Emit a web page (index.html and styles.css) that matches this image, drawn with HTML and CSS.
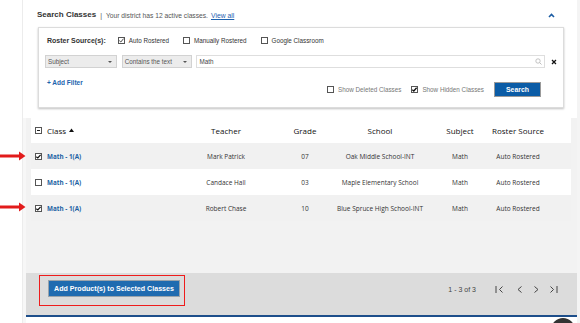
FILE: index.html
```html
<!DOCTYPE html>
<html>
<head>
<meta charset="utf-8">
<link rel="stylesheet" href="styles.css">
</head>
<body>
<div class="page">
  <section class="search">
    <div class="search-head">
      <h1 class="title">Search Classes</h1>
      <span class="sep">|</span>
      <span class="sub">Your district has 12 active classes.</span>
      <a class="link">View all</a>
      <svg class="chev" width="7" height="5" viewBox="0 0 7 5"><path d="M1 4 L3.5 1.5 L6 4" fill="none" stroke="#1b5ca3" stroke-width="1.6"/></svg>
    </div>
    <div class="box">
      <div class="roster-row">
        <span class="roster-label">Roster Source(s):</span>
        <label class="cb first"><span class="tick on"><svg width="7" height="7" viewBox="0 0 7 7"><path d="M1.3 3.6 L2.8 5 L5.6 1.6" fill="none" stroke="#333" stroke-width="0.9"/></svg></span>Auto Rostered</label>
        <label class="cb"><span class="tick"></span>Manually Rostered</label>
        <label class="cb"><span class="tick"></span>Google Classroom</label>
      </div>
      <div class="filter-row">
        <div class="select s1"><span>Subject</span><span class="caret"></span></div>
        <div class="select s2"><span>Contains the text</span><span class="caret"></span></div>
        <div class="input"><span>Math</span><svg class="mag" width="7" height="7" viewBox="0 0 7 7"><circle cx="3" cy="3" r="2.2" fill="none" stroke="#b5b5b5" stroke-width="0.8"/><path d="M4.6 4.6 L6.5 6.5" stroke="#b5b5b5" stroke-width="0.9"/></svg></div>
        <svg class="clear" width="6" height="6" viewBox="0 0 6 6"><path d="M1 1 L5 5 M5 1 L1 5" stroke="#111" stroke-width="1.3"/></svg>
      </div>
      <div class="action-row">
        <a class="add-filter">+ Add Filter</a>
        <div class="actions">
          <label class="cb light"><span class="tick"></span>Show Deleted Classes</label>
          <label class="cb light gap"><span class="tick dark"><svg width="7" height="7" viewBox="0 0 7 7"><path d="M1.3 3.8 L2.8 5 L5.6 1.8" fill="none" stroke="#111" stroke-width="1.3"/></svg></span>Show Hidden Classes</label>
          <button class="search-btn">Search</button>
        </div>
      </div>
    </div>
  </section>

  <section class="results">
    <div class="table">
      <div class="row head">
        <div class="c-class"><span class="tick minus"><span class="dash"></span></span><span>Class</span><svg class="sort" width="5" height="4" viewBox="0 0 5 4"><path d="M0 4 L2.5 0.5 L5 4 Z" fill="#111"/></svg></div>
        <div class="c">Teacher</div>
        <div class="c">Grade</div>
        <div class="c">School</div>
        <div class="c">Subject</div>
        <div class="c">Roster Source</div>
        <div></div>
      </div>
      <div class="row grey">
        <div class="c-class"><span class="tick"><svg width="7" height="7" viewBox="0 0 7 7"><path d="M1.3 3.8 L2.8 5 L5.6 1.8" fill="none" stroke="#111" stroke-width="1.2"/></svg></span><a class="cls">Math - 1(A)</a></div>
        <div class="c">Mark Patrick</div>
        <div class="c">07</div>
        <div class="c">Oak Middle School-INT</div>
        <div class="c">Math</div>
        <div class="c">Auto Rostered</div>
        <div></div>
      </div>
      <div class="row white">
        <div class="c-class"><span class="tick"></span><a class="cls">Math - 1(A)</a></div>
        <div class="c">Candace Hall</div>
        <div class="c">03</div>
        <div class="c">Maple Elementary School</div>
        <div class="c">Math</div>
        <div class="c">Auto Rostered</div>
        <div></div>
      </div>
      <div class="row grey">
        <div class="c-class"><span class="tick"><svg width="7" height="7" viewBox="0 0 7 7"><path d="M1.3 3.8 L2.8 5 L5.6 1.8" fill="none" stroke="#111" stroke-width="1.2"/></svg></span><a class="cls">Math - 1(A)</a></div>
        <div class="c">Robert Chase</div>
        <div class="c">10</div>
        <div class="c">Blue Spruce High School-INT</div>
        <div class="c">Math</div>
        <div class="c">Auto Rostered</div>
        <div></div>
      </div>
    </div>
  </section>

  <footer class="footbar">
    <button class="add-btn">Add Product(s) to Selected Classes</button>
    <div class="pager">
      <span class="count">1 - 3 of 3</span>
      <svg class="pg p1" width="9" height="9" viewBox="0 0 9 9"><path d="M1 1 L1 8 M7.5 1.5 L4.5 4.5 L7.5 7.5" fill="none" stroke="#444" stroke-width="1"/></svg>
      <svg class="pg p2" width="7" height="9" viewBox="0 0 7 9"><path d="M5.5 1.5 L2 4.5 L5.5 7.5" fill="none" stroke="#444" stroke-width="1"/></svg>
      <svg class="pg p3" width="7" height="9" viewBox="0 0 7 9"><path d="M1.5 1.5 L5 4.5 L1.5 7.5" fill="none" stroke="#444" stroke-width="1"/></svg>
      <svg class="pg p4" width="9" height="9" viewBox="0 0 9 9"><path d="M1.5 1.5 L4.5 4.5 L1.5 7.5 M8 1 L8 8" fill="none" stroke="#444" stroke-width="1"/></svg>
    </div>
    <div class="annot"></div>
  </footer>
</div>

<svg class="arrow a1" width="26" height="10" viewBox="0 0 26 10"><path d="M0 3.5 L19 3.5 L19 0.5 L25.5 5 L19 9.5 L19 6.5 L0 6.5 Z" fill="#e21b1b"/></svg>
<svg class="arrow a2" width="26" height="10" viewBox="0 0 26 10"><path d="M0 3.5 L19 3.5 L19 0.5 L25.5 5 L19 9.5 L19 6.5 L0 6.5 Z" fill="#e21b1b"/></svg>
<div class="chat"></div>
</body>
</html>
```

FILE: styles.css
```css
* { box-sizing: border-box; margin: 0; padding: 0; }

html, body { overflow: hidden; }

body {
  width: 580px;
  height: 323px;
  position: relative;
  background: #fff;
  font-family: "Liberation Sans", Arial, sans-serif;
  color: #333;
}

.page {
  margin-left: 22px;
  width: 558px;
  height: 323px;
  border-left: 1px solid #ececec;
  border-right: 3px solid #f4f4f4;
  background: linear-gradient(to right, #f7f7f7 3px, transparent 3px);
}

/* ---------- search section ---------- */
.search {
  height: 118px;
  padding: 10px 13px 0 14px;
  background: #fff;
}

.search-head {
  display: flex;
  align-items: center;
  height: 10px;
}

.title {
  font-size: 8px;
  font-weight: bold;
  color: #333;
  line-height: 10px;
}

.sep {
  font-size: 7px;
  color: #555;
  margin: 0 4px;
}

.sub {
  font-size: 6.7px;
  color: #555;
}

.link {
  font-size: 6.8px;
  color: #1f63b0;
  text-decoration: underline;
  margin-left: 3px;
}

.chev {
  margin-left: auto;
  margin-right: 9px;
}

.box {
  margin: 7px 0 0 1px;
  width: 526px;
  border: 1px solid #dcdcdc;
  box-shadow: 0 1px 2px rgba(0, 0, 0, 0.25);
  padding: 7px 6px 10px 8px;
  background: #fff;
}

.roster-row {
  display: flex;
  align-items: center;
  height: 10px;
}

.roster-label {
  font-size: 7px;
  font-weight: bold;
  color: #333;
}

.cb {
  display: flex;
  align-items: center;
  font-size: 6.3px;
  color: #333;
  margin-left: 14px;
}

.cb.first { margin-left: 12px; }

.cb.light { color: #777; margin-left: 0; }
.cb.light.gap { margin-left: 10px; }

.tick {
  width: 7px;
  height: 7px;
  border: 1px solid #555;
  background: #fff;
  margin-right: 4px;
  display: flex;
  align-items: center;
  justify-content: center;
  position: relative;
  flex: none;
}

.tick svg {
  position: absolute;
  left: -1px;
  top: -1px;
}

.tick.minus .dash {
  width: 3px;
  height: 1px;
  background: #222;
}

.filter-row {
  display: flex;
  align-items: center;
  height: 13px;
  margin: 10px 0 0 -2px;
}

.select {
  height: 13px;
  background: #ececec;
  border: 1px solid #d2d2d2;
  display: flex;
  align-items: center;
  justify-content: space-between;
  padding: 0 4px 0 2px;
  font-size: 6.3px;
  color: #555;
}

.s1 { width: 72px; }
.s2 { width: 71px; margin-left: 5px; }

.caret {
  width: 0;
  height: 0;
  border-left: 2px solid transparent;
  border-right: 2px solid transparent;
  border-top: 2.5px solid #555;
}

.input {
  width: 350px;
  height: 13px;
  margin-left: 4px;
  border: 1px solid #dedede;
  background: #fff;
  display: flex;
  align-items: center;
  justify-content: space-between;
  padding: 0 2px 0 2px;
  font-size: 6.3px;
  color: #444;
}

.clear {
  margin-left: 6px;
}

.action-row {
  display: flex;
  align-items: flex-start;
  height: 16px;
  margin-top: 13px;
}

.add-filter {
  font-size: 6.5px;
  font-weight: bold;
  color: #1b63ad;
  line-height: 8px;
  margin-top: -2px;
}

.actions {
  margin-left: auto;
  margin-right: 16px;
  display: flex;
  align-items: center;
  height: 16px;
}

.search-btn {
  margin-left: 10px;
  width: 47px;
  height: 15px;
  background: #0b5ca6;
  border: 1px solid #9a9a9a;
  color: #fff;
  font-family: "Liberation Sans", Arial, sans-serif;
  font-size: 6.9px;
  font-weight: bold;
}

/* ---------- results ---------- */
.results {
  height: 155px;
  padding-left: 8px;
  background: linear-gradient(to right, #f7f7f7 3px, #f2f2f2 3px);
}

.table {
  width: 540px;
  font-family: "Open Sans", "Noto Sans", sans-serif;
}

.row {
  display: grid;
  grid-template-columns: 139px 112px 46px 104px 56px 60px 23px;
  align-items: center;
  height: 26px;
  font-size: 6.5px;
  color: #333;
}

.row.head {
  height: 25px;
  background: #fff;
  font-size: 8px;
  color: #111;
}

.row.grey { background: #f1f1f1; }
.row.white { background: #fff; }

.c { text-align: center; white-space: nowrap; }

.c-class {
  display: flex;
  align-items: center;
  padding-left: 4px;
}

.c-class .tick { margin-right: 5px; }

.sort { margin-left: 3px; margin-top: -2px; }

.cls {
  color: #1a5fa3;
  font-weight: bold;
  font-size: 6.3px;
}

/* ---------- bottom bar ---------- */
.footbar {
  position: relative;
  margin-left: 3px;
  height: 44px;
  background: #dcdcdc;
  border-bottom: 2px solid #1d4e8a;
  display: flex;
  align-items: flex-start;
  padding: 7px 19px 0 22px;
}

.add-btn {
  width: 132px;
  height: 17px;
  background: #1f6bb0;
  border: 1px solid #9aa3ab;
  color: #fff;
  font-family: "Liberation Sans", Arial, sans-serif;
  font-size: 7.1px;
  font-weight: bold;
}

.pager {
  margin-left: auto;
  display: flex;
  align-items: center;
  height: 18px;
}

.count {
  font-size: 7px;
  color: #444;
  margin-right: 19px;
}

.p2 { margin-left: 12px; }
.p3 { margin-left: 10px; }
.p4 { margin-left: 9px; }

.annot {
  position: absolute;
  left: 13px;
  top: 2px;
  width: 146px;
  height: 31px;
  border: 1.5px solid #ee1c1c;
}

/* ---------- overlays ---------- */
.arrow {
  position: absolute;
  left: 0;
}

.a1 { top: 151px; }
.a2 { top: 202px; }

.chat {
  position: absolute;
  left: 551px;
  top: 318px;
  width: 24px;
  height: 5px;
  overflow: hidden;
}

.chat::before {
  content: "";
  display: block;
  width: 24px;
  height: 24px;
  border-radius: 50%;
  background: #333;
}
```
